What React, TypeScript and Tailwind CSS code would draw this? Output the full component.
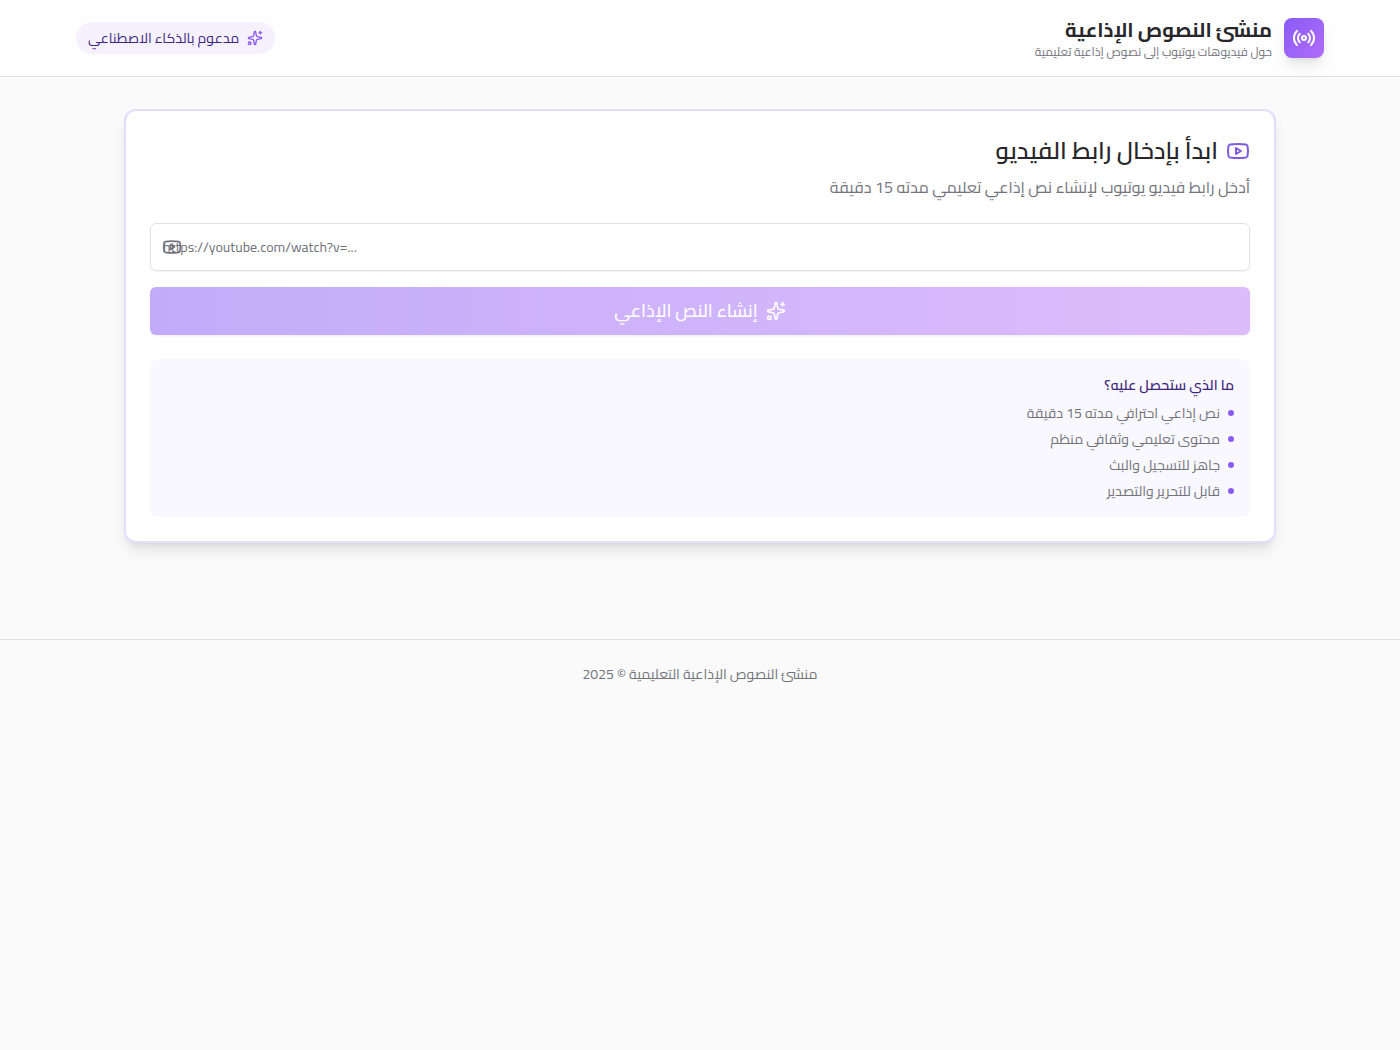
import { useState } from 'react';
import { Radio, Sparkles, Youtube } from 'lucide-react';

const features = [
  'نص إذاعي احترافي مدته 15 دقيقة',
  'محتوى تعليمي وثقافي منظم',
  'جاهز للتسجيل والبث',
  'قابل للتحرير والتصدير',
];

const Header = () => (
  <header className="border-b border-[#e1e2e6] bg-[#fefefe]">
    <div className="max-w-7xl mx-auto px-4 py-4 flex items-center justify-between">
      <div className="flex items-center gap-3">
        <div className="flex size-10 items-center justify-center rounded-lg bg-gradient-to-br from-[#895af6] to-[#b16cf9] shadow-lg">
          <Radio className="text-white" size={24} />
        </div>
        <div>
          <h1 className="text-xl font-bold text-[#27272b] whitespace-nowrap">منشئ النصوص الإذاعية</h1>
          <p className="text-xs text-[#73747b] whitespace-nowrap">حول فيديوهات يوتيوب إلى نصوص إذاعية تعليمية</p>
        </div>
      </div>
      <div className="flex items-center gap-2 rounded-full bg-[#f5f1fe] px-3 py-1.5">
        <Sparkles className="text-[#895af6]" size={16} />
        <span className="text-sm text-[#40277d] whitespace-nowrap">مدعوم بالذكاء الاصطناعي</span>
      </div>
    </div>
  </header>
);

const VideoForm = () => {
  const [url, setUrl] = useState('');

  return (
    <form className="space-y-4" onSubmit={(e) => e.preventDefault()}>
      <div className="relative">
        <Youtube className="absolute left-3 top-1/2 -translate-y-1/2 text-[#73747b]" size={20} />
        <input
          type="url"
          dir="ltr"
          aria-label="رابط الفيديو"
          placeholder="https://youtube.com/watch?v=..."
          value={url}
          onChange={(e) => setUrl(e.target.value)}
          className="block h-12 w-full rounded-md border border-[#e1e2e6] bg-transparent px-3 text-sm text-[#27272b] shadow-xs placeholder:text-[#73747b]"
        />
      </div>
      <button
        type="submit"
        disabled={!url}
        className="flex h-12 w-full items-center justify-center gap-2 rounded-md bg-gradient-to-r from-[#895af6] to-[#bd7cf9] text-lg font-medium text-white shadow-sm disabled:opacity-50"
      >
        <Sparkles size={20} />
        إنشاء النص الإذاعي
      </button>
    </form>
  );
};

const App = () => {
  return (
    <div dir="rtl" lang="ar" className="min-h-screen bg-[#fafafa] font-['Cairo','Noto_Sans','DejaVu_Sans',sans-serif]">
      <Header />

      <main className="max-w-7xl mx-auto px-4 py-8">
        <section className="max-w-6xl mx-auto rounded-xl border-2 border-[#e3dffa] bg-white p-6 shadow-lg">
          <h2 className="flex items-center gap-2 text-2xl font-semibold text-[#27272b]">
            <Youtube className="text-[#7f5ae0]" size={24} />
            ابدأ بإدخال رابط الفيديو
          </h2>
          <p className="mt-2 mb-6 text-base text-[#73747b]">
            أدخل رابط فيديو يوتيوب لإنشاء نص إذاعي تعليمي مدته 15 دقيقة
          </p>

          <VideoForm />

          <div className="mt-6 rounded-lg bg-[#f9f8fe] p-4">
            <h3 className="mb-2 text-sm font-semibold text-[#40277d]">ما الذي ستحصل عليه؟</h3>
            <ul className="space-y-1.5 text-sm text-[#73747b]">
              {features.map((feature) => (
                <li key={feature} className="flex items-center gap-2">
                  <span className="size-1.5 rounded-full bg-[#895af6]" />
                  {feature}
                </li>
              ))}
            </ul>
          </div>
        </section>
      </main>

      <footer className="mt-16 border-t border-[#e1e2e6] py-6">
        <p className="text-center text-sm text-[#73747b]">منشئ النصوص الإذاعية التعليمية © 2025</p>
      </footer>
    </div>
  );
};

export default App;
